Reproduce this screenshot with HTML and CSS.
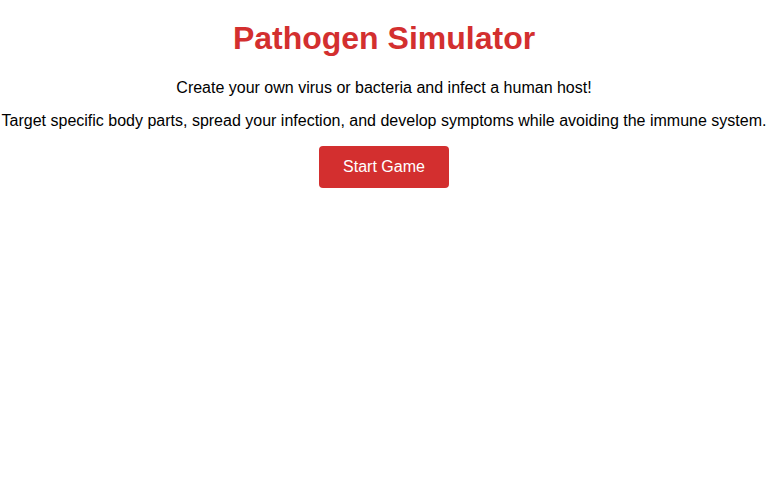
FILE: index.html
```html
<!DOCTYPE html>
<html lang="en">
<head>
<meta charset="utf-8">
<title>Pathogen Simulator</title>
<link rel="stylesheet" href="styles.css">
</head>
<body>
  <main class="intro">
    <h1 class="intro-title">Pathogen Simulator</h1>
    <p class="intro-text">Create your own virus or bacteria and infect a human host!</p>
    <p class="intro-text">Target specific body parts, spread your infection, and develop symptoms while avoiding the immune system.</p>
    <button class="start-btn" type="button">Start Game</button>
  </main>
</body>
</html>
```
FILE: styles.css
```css
body {
  margin: 0;
  background: #ffffff;
  font-family: "Liberation Sans", Arial, sans-serif;
  color: #000000;
}

.intro {
  display: flex;
  flex-direction: column;
  align-items: center;
  text-align: center;
}

.intro-title {
  margin: 20px 0 0;
  font-size: 32px;
  line-height: 37px;
  font-weight: bold;
  color: #d32f2f;
}

.intro-text {
  margin: 22px 0 0;
  font-size: 16px;
  line-height: 18px;
  white-space: nowrap;
}

.intro-text + .intro-text {
  margin-top: 15px;
}

.start-btn {
  margin-top: 16px;
  padding: 12px 24px;
  border: none;
  border-radius: 4px;
  background: #d32f2f;
  color: #ffffff;
  font-family: inherit;
  font-size: 16px;
  line-height: 18px;
  cursor: pointer;
}
```
